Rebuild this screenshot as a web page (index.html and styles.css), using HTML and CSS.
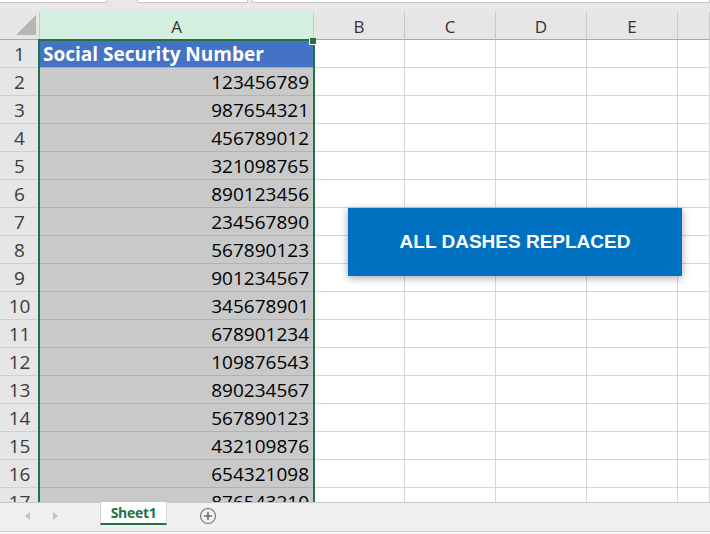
FILE: index.html
```html
<!DOCTYPE html>
<html lang="en">

<head>
    <meta charset="UTF-8">
    <title>Social Security Numbers</title>
    <link rel="stylesheet" href="styles.css">
</head>

<body>
    <div class="window">
        <div class="formula-strip">
            <span class="box box-name"></span>
            <span class="box box-fx"></span>
            <span class="box box-input"></span>
        </div>

        <div class="sheet">
            <div class="row header-row">
                <div class="corner"><span class="corner-mark"></span></div>
                <div class="col-head col-active">A</div>
                <div class="col-head">B</div>
                <div class="col-head">C</div>
                <div class="col-head">D</div>
                <div class="col-head">E</div>
                <div class="col-head"></div>
            </div>

            <div class="row">
                <div class="row-head">1</div>
                <div class="cell col-a title">Social Security Number</div>
                <div class="cell"></div><div class="cell"></div><div class="cell"></div><div class="cell"></div><div class="cell"></div>
            </div>
            <div class="row">
                <div class="row-head">2</div>
                <div class="cell col-a">123456789</div>
                <div class="cell"></div><div class="cell"></div><div class="cell"></div><div class="cell"></div><div class="cell"></div>
            </div>
            <div class="row">
                <div class="row-head">3</div>
                <div class="cell col-a">987654321</div>
                <div class="cell"></div><div class="cell"></div><div class="cell"></div><div class="cell"></div><div class="cell"></div>
            </div>
            <div class="row">
                <div class="row-head">4</div>
                <div class="cell col-a">456789012</div>
                <div class="cell"></div><div class="cell"></div><div class="cell"></div><div class="cell"></div><div class="cell"></div>
            </div>
            <div class="row">
                <div class="row-head">5</div>
                <div class="cell col-a">321098765</div>
                <div class="cell"></div><div class="cell"></div><div class="cell"></div><div class="cell"></div><div class="cell"></div>
            </div>
            <div class="row">
                <div class="row-head">6</div>
                <div class="cell col-a">890123456</div>
                <div class="cell"></div><div class="cell"></div><div class="cell"></div><div class="cell"></div><div class="cell"></div>
            </div>
            <div class="row">
                <div class="row-head">7</div>
                <div class="cell col-a">234567890</div>
                <div class="cell"></div><div class="cell"></div><div class="cell"></div><div class="cell"></div><div class="cell"></div>
            </div>
            <div class="row">
                <div class="row-head">8</div>
                <div class="cell col-a">567890123</div>
                <div class="cell"></div><div class="cell"></div><div class="cell"></div><div class="cell"></div><div class="cell"></div>
            </div>
            <div class="row">
                <div class="row-head">9</div>
                <div class="cell col-a">901234567</div>
                <div class="cell"></div><div class="cell"></div><div class="cell"></div><div class="cell"></div><div class="cell"></div>
            </div>
            <div class="row">
                <div class="row-head">10</div>
                <div class="cell col-a">345678901</div>
                <div class="cell"></div><div class="cell"></div><div class="cell"></div><div class="cell"></div><div class="cell"></div>
            </div>
            <div class="row">
                <div class="row-head">11</div>
                <div class="cell col-a">678901234</div>
                <div class="cell"></div><div class="cell"></div><div class="cell"></div><div class="cell"></div><div class="cell"></div>
            </div>
            <div class="row">
                <div class="row-head">12</div>
                <div class="cell col-a">109876543</div>
                <div class="cell"></div><div class="cell"></div><div class="cell"></div><div class="cell"></div><div class="cell"></div>
            </div>
            <div class="row">
                <div class="row-head">13</div>
                <div class="cell col-a">890234567</div>
                <div class="cell"></div><div class="cell"></div><div class="cell"></div><div class="cell"></div><div class="cell"></div>
            </div>
            <div class="row">
                <div class="row-head">14</div>
                <div class="cell col-a">567890123</div>
                <div class="cell"></div><div class="cell"></div><div class="cell"></div><div class="cell"></div><div class="cell"></div>
            </div>
            <div class="row">
                <div class="row-head">15</div>
                <div class="cell col-a">432109876</div>
                <div class="cell"></div><div class="cell"></div><div class="cell"></div><div class="cell"></div><div class="cell"></div>
            </div>
            <div class="row">
                <div class="row-head">16</div>
                <div class="cell col-a">654321098</div>
                <div class="cell"></div><div class="cell"></div><div class="cell"></div><div class="cell"></div><div class="cell"></div>
            </div>
            <div class="row">
                <div class="row-head">17</div>
                <div class="cell col-a">876543210</div>
                <div class="cell"></div><div class="cell"></div><div class="cell"></div><div class="cell"></div><div class="cell"></div>
            </div>

            <!-- selection A1:A17 -->
            <div class="selection"><span class="handle"></span></div>

            <div class="notice">ALL DASHES REPLACED</div>
        </div>

        <div class="tab-bar">
            <div class="nav-arrows">
                <span class="arrow arrow-left"></span>
                <span class="arrow arrow-right"></span>
            </div>
            <div class="sheet-tab">Sheet1</div>
            <div class="add-sheet">
                <svg width="18" height="18" viewBox="0 0 18 18">
                    <circle cx="9" cy="9" r="7.5" fill="none" stroke="#7a7a7a" stroke-width="1.2" />
                    <path d="M9 5v8M5 9h8" stroke="#6a6a6a" stroke-width="1.6" />
                </svg>
            </div>
        </div>
        <div class="status-line"></div>
    </div>
</body>

</html>
```

FILE: styles.css
```css
body {
    margin: 0;
    padding: 0;
    background-color: #ffffff;
    font-family: "Open Sans", "Liberation Sans", sans-serif;
}

.window {
    width: 710px;
    height: 534px;
    overflow: hidden;
    display: flex;
    flex-direction: column;
}

/* remains of the formula bar */
.formula-strip {
    height: 12px;
    flex: none;
    background-color: #e8e8e8;
    display: flex;
}

.box {
    height: 2px;
    background-color: #ffffff;
    border-bottom: 1px solid #c8c8c8;
    border-right: 1px solid #c8c8c8;
}

.box-name {
    width: 106px;
}

.box-fx {
    width: 109px;
    margin-left: 30px;
    border-left: 1px solid #c8c8c8;
}

.box-input {
    flex: 1;
    margin-left: 4px;
    border-left: 1px solid #c8c8c8;
}

.sheet {
    position: relative;
    height: 490px;
    flex: none;
    overflow: hidden;
}

.row {
    display: grid;
    grid-template-columns: 40px 274px 91px 91px 91px 91px 1fr;
    height: 28px;
}

.row > div {
    box-sizing: border-box;
    border-right: 1px solid #d6d6d6;
    border-bottom: 1px solid #d6d6d6;
    overflow: hidden;
}

.header-row > div {
    background-color: #e6e6e6;
    border-right-color: #c8c8c8;
    border-bottom-color: #a8a8a8;
}

.corner {
    position: relative;
}

.corner-mark {
    position: absolute;
    left: 16px;
    top: 3px;
    width: 0;
    height: 0;
    border-left: 20px solid transparent;
    border-bottom: 20px solid #b6b6b6;
}

.col-head {
    text-align: center;
    font-size: 17px;
    line-height: 27px;
    padding-top: 1px;
    color: #333333;
}

.header-row .col-active {
    background-color: #d3f0e0;
    border-right-color: #c8c8c8;
}

.row-head {
    background-color: #e6e6e6;
    text-align: center;
    font-size: 19px;
    line-height: 27px;
    padding-top: 1px;
    color: #3c3c3c;
}

.row > .row-head {
    border-right-color: #b8b8b8;
    border-bottom-color: #cfcfcf;
}

.cell {
    font-size: 19px;
    line-height: 27px;
    padding-top: 1px;
    color: #000000;
    white-space: nowrap;
}

.row > .col-a {
    background-color: #c9c9c9;
    text-align: right;
    padding-right: 4px;
    border-bottom-color: #b2b2b2;
}

.row > .title {
    background-color: #4472c4;
    color: #ffffff;
    font-weight: bold;
    text-align: left;
    padding-left: 3px;
    border-bottom-color: #a8a8a8;
}

.selection {
    position: absolute;
    left: 38px;
    top: 27px;
    width: 277px;
    height: 480px;
    box-sizing: border-box;
    border: 2px solid #217346;
}

.handle {
    position: absolute;
    right: -3px;
    top: -3px;
    width: 6px;
    height: 6px;
    background-color: #217346;
    border: 1px solid #ffffff;
    border-top: none;
    border-right: none;
}

.notice {
    position: absolute;
    left: 348px;
    top: 196px;
    width: 334px;
    height: 68px;
    background-color: #0070c0;
    color: #ffffff;
    font-family: "Liberation Sans", Arial, sans-serif;
    font-weight: bold;
    font-size: 19px;
    display: flex;
    align-items: center;
    justify-content: center;
    box-shadow: 0 2px 8px rgba(0, 0, 0, 0.35);
}

.tab-bar {
    height: 28px;
    flex: none;
    background-color: #f0f0f0;
    border-top: 1px solid #c6c6c6;
    display: flex;
    align-items: flex-start;
}

.nav-arrows {
    width: 100px;
    height: 26px;
    display: flex;
    align-items: center;
    gap: 23px;
    padding-left: 25px;
    box-sizing: border-box;
}

.arrow {
    width: 0;
    height: 0;
    border-top: 4px solid transparent;
    border-bottom: 4px solid transparent;
}

.arrow-left {
    border-right: 5px solid #c4c4c4;
}

.arrow-right {
    border-left: 5px solid #c4c4c4;
}

.sheet-tab {
    width: 65px;
    height: 21px;
    margin-top: -1px;
    background-color: #ffffff;
    border-left: 1px solid #d4d4d4;
    border-right: 1px solid #d4d4d4;
    border-bottom: 2px solid #217346;
    color: #217346;
    font-weight: bold;
    font-size: 14px;
    line-height: 22px;
    letter-spacing: -0.3px;
    text-align: center;
}

.add-sheet {
    margin-left: 32px;
    padding-top: 4px;
}

.status-line {
    flex: 1;
    background-color: #f8f8f8;
    border-top: 1px solid #d0d0d0;
}
```
